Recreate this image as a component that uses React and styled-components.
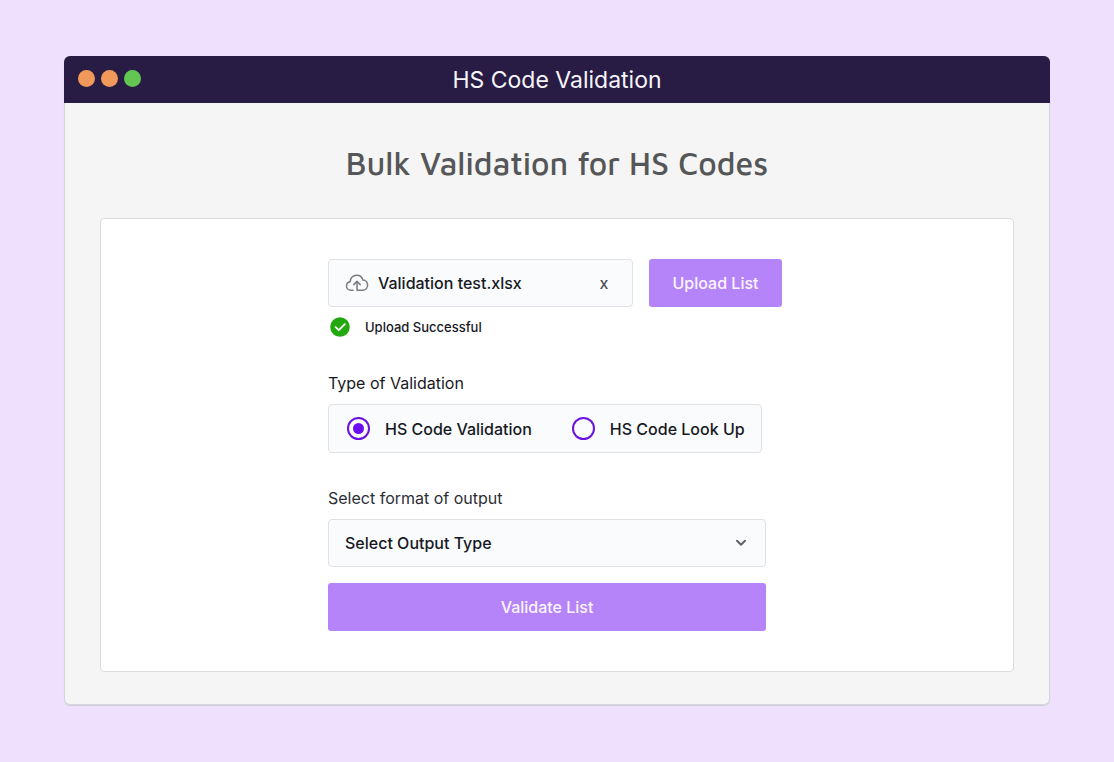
import React, { useState } from 'react'
import styled, { createGlobalStyle } from 'styled-components'

const App = () => {
    const [fileName, setFileName] = useState('Validation test.xlsx')
    const [type, setType] = useState('validation')

    return (
        <>
            <GlobalStyle />
            <Page>
                <Window>
                    <TitleBar>
                        <Dots>
                            <Dot $color="#f0995a" />
                            <Dot $color="#f0995a" />
                            <Dot $color="#62c554" />
                        </Dots>
                        <WindowTitle>HS Code Validation</WindowTitle>
                    </TitleBar>
                    <Content>
                        <Heading>Bulk Validation for HS Codes</Heading>
                        <Card>
                            <Form onSubmit={(e) => e.preventDefault()}>
                                <UploadRow>
                                    <FileField>
                                        <CloudIcon />
                                        <FileName>{fileName}</FileName>
                                        <ClearButton
                                            type="button"
                                            aria-label="Remove file"
                                            onClick={() => setFileName('')}
                                        >
                                            x
                                        </ClearButton>
                                    </FileField>
                                    <UploadButton type="button">Upload List</UploadButton>
                                </UploadRow>
                                <Status>
                                    <CheckIcon />
                                    Upload Successful
                                </Status>

                                <Group>
                                    <Legend>Type of Validation</Legend>
                                    <RadioBox>
                                        <RadioLabel>
                                            <Radio
                                                name="type"
                                                checked={type === 'validation'}
                                                onChange={() => setType('validation')}
                                            />
                                            HS Code Validation
                                        </RadioLabel>
                                        <RadioLabel>
                                            <Radio
                                                name="type"
                                                checked={type === 'lookup'}
                                                onChange={() => setType('lookup')}
                                            />
                                            HS Code Look Up
                                        </RadioLabel>
                                    </RadioBox>
                                </Group>

                                <OutputSection>
                                    <Label htmlFor="output">Select format of output</Label>
                                    <SelectWrap>
                                        <Select id="output" defaultValue="">
                                            <option value="">Select Output Type</option>
                                            <option value="xlsx">XLSX</option>
                                            <option value="csv">CSV</option>
                                        </Select>
                                        <ChevronIcon />
                                    </SelectWrap>
                                    <Button type="submit">Validate List</Button>
                                </OutputSection>
                            </Form>
                        </Card>
                    </Content>
                </Window>
            </Page>
        </>
    )
}

export default App

const CloudIcon = () => (
    <svg width="24" height="20" viewBox="0 0 24 20" fill="none" stroke="#7b7b80" strokeWidth="1.5" strokeLinecap="round" strokeLinejoin="round" aria-hidden="true">
        <path d="M8 17.3H6C3.4 17.3 1.5 15.4 1.5 13C1.5 10.8 3.1 9.1 5.2 8.8C5.2 4.9 8 2.2 11.6 2.2C14.7 2.2 17.2 4.2 17.9 7.1C20.7 7.2 22.6 9.4 22.6 12.1C22.6 15 20.4 17.3 17.6 17.3H12V8.8" />
        <path d="M8.8 11.6L12 8.4L15.2 11.6" />
    </svg>
)

const CheckIcon = () => (
    <svg width="20" height="20" viewBox="0 0 20 20" fill="none" aria-hidden="true">
        <circle cx="10" cy="10" r="9.8" fill="#24a810" />
        <path d="M5.6 10.2L8.8 13.2L14.8 7.2" stroke="#fff" strokeWidth="1.8" strokeLinecap="round" strokeLinejoin="round" />
    </svg>
)

const ChevronIcon = () => (
    <Chevron width="12" height="8" viewBox="0 0 12 8" fill="none" aria-hidden="true">
        <path d="M2 1.8L6 5.8L10 1.8" stroke="#626469" strokeWidth="2" strokeLinecap="round" strokeLinejoin="round" />
    </Chevron>
)

const GlobalStyle = createGlobalStyle`
    * {
        box-sizing: border-box;
    }

    body {
        margin: 0;
        background: #efe1fd;
        color: #17191f;
        font-family: Inter, "Liberation Sans", sans-serif;
        font-size: 16px;
        line-height: 24px;
    }

    button, input, select {
        font: inherit;
        color: inherit;
    }
`

const Page = styled.main`
    min-height: 100vh;
    padding: 56px 64px;
`

const Window = styled.section`
    border-radius: 6px;
    overflow: hidden;
    background: #f5f5f5;
    box-shadow: inset 0 0 0 1px #d5d4dc, 0 1px 1px #d0cbdc;
`

const TitleBar = styled.header`
    display: grid;
    grid-template-columns: 1fr auto 1fr;
    align-items: center;
    height: 47px;
    padding: 0 14px;
    background: #281c44;
`

const Dots = styled.div`
    display: flex;
    gap: 6px;
    padding-bottom: 2px;
`

const Dot = styled.span`
    width: 17px;
    height: 17px;
    border-radius: 50%;
    background: ${({ $color }) => $color};
`

const WindowTitle = styled.div`
    color: #f6f4fa;
    font-size: 23px;
    line-height: 28px;
`

const Content = styled.div`
    padding: 38px 36px 33px;
`

const Heading = styled.h1`
    margin: 0 0 33px;
    color: #555658;
    font-family: "Maven Pro", Inter, sans-serif;
    font-size: 32px;
    font-weight: 500;
    line-height: 44px;
    text-align: center;
`

const Card = styled.div`
    padding: 40px 24px;
    border: 1px solid #dcdcde;
    border-radius: 4px;
    background: #fff;
`

const Form = styled.form`
    max-width: 458px;
    margin: 0 auto;
`

const UploadRow = styled.div`
    display: flex;
    gap: 16px;
`

const FileField = styled.div`
    display: flex;
    align-items: center;
    gap: 9px;
    width: 305px;
    height: 48px;
    padding: 0 16px;
    border: 1px solid #dfe1e5;
    border-radius: 4px;
    background: #f9fbfd;
`

const FileName = styled.span`
    flex: 1;
    font-weight: 500;
`

const ClearButton = styled.button`
    width: 24px;
    padding: 0;
    border: 0;
    background: none;
    color: #505257;
    font-weight: 500;
    cursor: pointer;
`

const Button = styled.button`
    width: 100%;
    height: 48px;
    border: 0;
    border-radius: 3px;
    background: #b584f9;
    color: #fdf5ff;
    font-weight: 500;
    cursor: pointer;
`

const UploadButton = styled(Button)`
    width: 133px;
`

const Status = styled.div`
    display: flex;
    align-items: center;
    gap: 15px;
    margin-top: 10px;
    padding-left: 2px;
    font-size: 13px;
    font-weight: 500;
    line-height: 20px;
`

const Group = styled.fieldset`
    margin: 34px 0 0;
    padding: 0;
    border: 0;
`

const Legend = styled.legend`
    padding: 0;
    margin-bottom: 9px;
`

const RadioBox = styled.div`
    display: flex;
    align-items: center;
    gap: 40px;
    width: 434px;
    height: 49px;
    padding: 0 16px 0 18px;
    border: 1px solid #dfe1e5;
    border-radius: 4px;
    background: #f9fbfd;
`

const RadioLabel = styled.label`
    display: flex;
    align-items: center;
    gap: 15px;
    font-weight: 500;
    white-space: nowrap;
`

const Radio = styled.input.attrs({ type: 'radio' })`
    appearance: none;
    display: grid;
    place-items: center;
    width: 23px;
    height: 23px;
    margin: 0;
    border: 2px solid #6a12e0;
    border-radius: 50%;

    &:checked::before {
        content: "";
        width: 11px;
        height: 11px;
        border-radius: 50%;
        background: #6c0ef2;
    }
`

const OutputSection = styled.div`
    width: 438px;
    margin-top: 33px;
`

const Label = styled.label`
    display: block;
    margin-bottom: 9px;
    color: #2c2e35;
`

const SelectWrap = styled.div`
    position: relative;
    margin-bottom: 16px;
`

const Select = styled.select`
    appearance: none;
    display: block;
    width: 100%;
    height: 48px;
    padding: 0 16px;
    border: 1px solid #dfe1e5;
    border-radius: 4px;
    background: #f9fbfd;
    font-weight: 500;
`

const Chevron = styled.svg`
    position: absolute;
    top: 20px;
    right: 19px;
    pointer-events: none;
`
